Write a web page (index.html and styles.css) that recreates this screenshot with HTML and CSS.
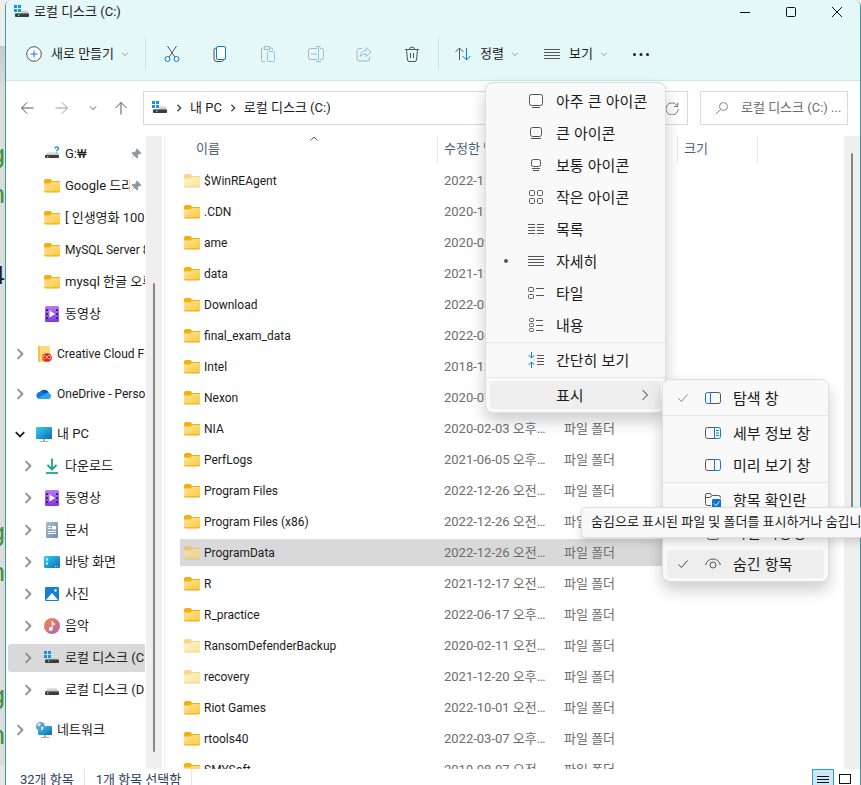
FILE: index.html
```
<!DOCTYPE html>
<html lang="ko">
<head>
    <meta charset="UTF-8">
    <title>로컬 디스크 (C:)</title>
    <link rel="stylesheet" href="styles.css">
</head>
<body>
    <svg class="defs" aria-hidden="true">
        <defs>
            <linearGradient id="gFolder" x1="0" y1="0" x2="1" y2="1">
                <stop offset="0" stop-color="#ffe69b"/><stop offset="1" stop-color="#ffc937"/>
            </linearGradient>
            <linearGradient id="gScreen" x1="0" y1="0" x2="1" y2="1">
                <stop offset="0" stop-color="#37d0e6"/><stop offset="1" stop-color="#0a6bbd"/>
            </linearGradient>
            <linearGradient id="gVideo" x1="0" y1="0" x2="0" y2="1">
                <stop offset="0" stop-color="#b77cf5"/><stop offset="1" stop-color="#8536dc"/>
            </linearGradient>
            <linearGradient id="gMusic" x1="0" y1="0" x2="1" y2="1">
                <stop offset="0" stop-color="#f28c4f"/><stop offset="1" stop-color="#b25fae"/>
            </linearGradient>
            <linearGradient id="gDoc" x1="0" y1="0" x2="1" y2="1">
                <stop offset="0" stop-color="#a9bfd3"/><stop offset="1" stop-color="#6f8cab"/>
            </linearGradient>
            <linearGradient id="gDrive" x1="0" y1="0" x2="0" y2="1">
                <stop offset="0" stop-color="#e9e9e9"/><stop offset="1" stop-color="#b9b9b9"/>
            </linearGradient>
        </defs>
        <symbol id="folder" viewBox="0 0 16 16">
            <path d="M0 2.500Q0 1 1.500 1H6Q7 1 7.500 2L8 3H16V8H0Z" fill="#f5b010"/>
            <path d="M0 5.500H6.500L8 4H16V12.500Q16 14 14.500 14H1.500Q0 14 0 12.500Z" fill="url(#gFolder)"/>
            <path d="M0 13Q.3 14 1.500 14H14.500Q15.700 14 16 13" fill="none" stroke="#e6a31b"/>
        </symbol>
        <symbol id="drive" viewBox="0 0 16 16">
            <path d="M3.500 6H12.500L15 10H1Z" fill="url(#gDrive)"/>
            <rect x="1" y="9.500" width="14" height="3.500" rx=".8" fill="#3b3b3b"/>
            <rect x="3" y="10.500" width="1.500" height="1.500" fill="#3df04d"/>
        </symbol>
        <symbol id="windrive" viewBox="0 0 16 16">
            <path d="M7 6H13L15 10H1.500V9H7Z" fill="url(#gDrive)"/>
            <rect x="1" y="9.500" width="14" height="3.500" rx=".8" fill="#3b3b3b"/>
            <rect x="4" y="10.500" width="1.500" height="1.500" fill="#3df04d"/>
            <path d="M0 1H3V4H0ZM4 1H7V4H4ZM0 5H3V8H0ZM4 5H7V8H4Z" fill="#1593e0"/>
        </symbol>
        <symbol id="gdrive" viewBox="0 0 16 16">
            <path d="M3.500 6H12.500L15 10H1Z" fill="url(#gDrive)"/>
            <rect x="1" y="9" width="14" height="3" rx=".8" fill="#3b3b3b"/>
            <rect x="3" y="10" width="1.500" height="1.500" fill="#3df04d"/>
            <path d="M11.200 2.500Q11.200.8 12.800.8Q14.500.8 14.500 2.300Q14.500 3.300 12.900 4.300V5.300M12.900 6.500V7.500" fill="none" stroke="#1a86d9" stroke-width="1.300"/>
        </symbol>
        <symbol id="video" viewBox="0 0 16 16">
            <rect x="1" y="0" width="14" height="16" rx="1.200" fill="url(#gVideo)"/>
            <path d="M5.500 4.500V11.500L11 8Z" fill="#fff"/>
            <path d="M2 3H4V5H2ZM2 7H4V9H2ZM2 11H4V13H2ZM12 3H14V5H12ZM12 7H14V9H12ZM12 11H14V13H12Z" fill="#47208a"/>
        </symbol>
        <symbol id="creative" viewBox="0 0 16 16">
            <path d="M2 0H13Q14 0 14 1V16H3Q2 16 2 15Z" fill="#ffd974"/>
            <path d="M2 0H4V16H3Q2 16 2 15Z" fill="#f5c04a"/>
            <ellipse cx="11" cy="11.500" rx="5" ry="4.300" fill="#e2231a"/>
            <path d="M8.600 13.200A1.800 1.800 0 1 1 10.300 10.500L12.500 12.800A1.800 1.800 0 1 0 11.800 9.900L9.500 13" fill="none" stroke="#ffe0c9" stroke-width=".9"/>
        </symbol>
        <symbol id="onedrive" viewBox="0 0 16 16">
            <path d="M4 6A5 5 0 0 1 12.500 6L13 9L4 12Z" fill="#0a58b5"/>
            <path d="M3.500 13A3.500 3.500 0 0 1 2.500 6.300Q5 5 7.500 7L12 12Z" fill="#1479d4"/>
            <path d="M3 13Q2 12 3 11.500L9 7.800Q11 6.200 13 7.300A3 3 0 0 1 13 13Z" fill="#2ea3ee"/>
        </symbol>
        <symbol id="pc" viewBox="0 0 16 16">
            <rect x="0" y="1" width="16" height="12" rx="1" fill="url(#gScreen)"/>
            <path d="M7 13H9V15H12V16H4V15H7Z" fill="#a7adb3"/>
        </symbol>
        <symbol id="download" viewBox="0 0 16 16">
            <path d="M8 .5V11M3.500 7L8 11.500L12.500 7" fill="none" stroke="#16a58c" stroke-width="1.800"/>
            <path d="M2 15H14" stroke="#16a58c" stroke-width="1.800"/>
        </symbol>
        <symbol id="document" viewBox="0 0 16 16">
            <rect x="2" y="0" width="12" height="16" rx="1" fill="url(#gDoc)"/>
            <path d="M4 4.500H7M4 6.500H7M4 9.500H12M4 11.500H12" stroke="#fff" stroke-width="1.200"/>
            <path d="M8 4H12V7.500H8Z" fill="#fff"/>
        </symbol>
        <symbol id="desktop" viewBox="0 0 16 16">
            <rect x="0" y="2" width="16" height="12" rx="1.200" fill="url(#gScreen)"/>
            <path d="M2 4.500H4V6.500H2ZM2 8.500H4V10.500H2Z" fill="#e6fbff"/>
            <path d="M11 12.500H12M13 12.500H14" stroke="#fff"/>
        </symbol>
        <symbol id="picture" viewBox="0 0 16 16">
            <rect x="1" y="1" width="14" height="14" rx="1" fill="#1680d6"/>
            <path d="M2 14L8 7L14 14Z" fill="#fff"/>
            <circle cx="11.500" cy="4.500" r="1.200" fill="#fff"/>
        </symbol>
        <symbol id="music" viewBox="0 0 16 16">
            <circle cx="8" cy="8" r="8" fill="url(#gMusic)"/>
            <circle cx="6.700" cy="11" r="1.900" fill="#fff"/>
            <path d="M7.700 3H8.600Q9 5 11 5.500V7Q9.500 7 8.600 6V11H7.700Z" fill="#fff"/>
        </symbol>
        <symbol id="network" viewBox="0 0 16 16">
            <rect x="2" y="4" width="14" height="9" rx="1" fill="url(#gScreen)"/>
            <path d="M8 13H10V15H13V16H5V15H8Z" fill="#a7adb3"/>
            <circle cx="4.500" cy="4.500" r="4.500" fill="#5f9fc4"/>
            <path d="M2 1.500Q4 .5 5 2L3.500 4.500L1 4ZM5 5L7.500 4.500L7 7.500L5 8Z" fill="#c8e6ee"/>
        </symbol>
        <symbol id="pin" viewBox="0 0 12 12">
            <path d="M7 .5L11.500 5L10.500 6L9.500 5.800L7.800 7.500L8 9.500L7 10.500L4.500 8L.8 11.200L4 7.500L1.500 5L2.500 4L4.500 4.200L6.200 2.500L6 1.500Z" fill="#8b98a5"/>
        </symbol>
        <symbol id="right" viewBox="0 0 10 10"><path d="M3 1L7 5L3 9"/></symbol>
        <symbol id="down" viewBox="0 0 10 10"><path d="M1.500 3.500L5 7L8.500 3.500"/></symbol>
        <symbol id="check" viewBox="0 0 12 12"><path d="M1.500 6.500L4.500 9.500L10.500 2.500"/></symbol>
        <symbol id="lines" viewBox="0 0 16 16"><path d="M0 3.500H16M0 6.500H16M0 9.500H16M0 12.500H16"/></symbol>
    </svg>

    <div class="backdrop" aria-hidden="true">
        <span class="code code-1">g</span>
        <span class="code code-2">n</span>
        <span class="code code-3">4</span>
        <span class="code code-4">g</span>
        <span class="code code-5">n</span>
        <span class="code code-6">g</span>
        <span class="code code-7">n</span>
    </div>

    <div class="window">
        <header class="top">
            <div class="titlebar">
                <svg class="icon"><use href="#windrive"/></svg>
                <span class="title">로컬 디스크 (C:)</span>
                <button class="win-btn" aria-label="최소화"><svg viewBox="0 0 12 12"><path d="M1 6.500H11"/></svg></button>
                <button class="win-btn" aria-label="최대화"><svg viewBox="0 0 12 12"><rect x="1.500" y="1.500" width="9" height="9" rx="1"/></svg></button>
                <button class="win-btn" aria-label="닫기"><svg viewBox="0 0 12 12"><path d="M1 1L11 11M11 1L1 11"/></svg></button>
            </div>
            <div class="commands">
                <button class="cmd">
                    <svg class="icon line" viewBox="0 0 16 16"><circle cx="8" cy="8" r="7.300" fill="#fff"/><path class="blue" d="M8 4.500V11.500M4.500 8H11.500"/></svg>
                    새로 만들기
                    <svg class="caret"><use href="#down"/></svg>
                </button>
                <span class="divider"></span>
                <div class="tools">
                    <button class="tool" aria-label="잘라내기"><svg class="icon line" viewBox="0 0 16 16"><path d="M3.500 0L10.800 11M12.500 0L5.200 11"/><g class="blue"><circle cx="3.500" cy="13" r="2.500"/><circle cx="12.500" cy="13" r="2.500"/></g></svg></button>
                    <button class="tool" aria-label="복사"><svg class="icon line" viewBox="0 0 16 16"><path d="M4 2Q2 2 2 4V12.500Q2 15.500 5 15.500H9.500Q11 15.500 11.500 14"/><rect class="blue" x="4.500" y=".5" width="9" height="13" rx="1.500" fill="#fff"/></svg></button>
                    <button class="tool off" aria-label="붙여넣기"><svg class="icon line" viewBox="0 0 16 16"><path d="M5 15.500H2.500Q1.500 15.500 1.500 14.500V3Q1.500 2 2.500 2H4.500M9.500 2H11.500Q12.500 2 12.500 3V4M4.500.5H9.500V3.500H4.500Z"/><rect class="blue" x="7.500" y="5.500" width="7" height="10" rx="1"/></svg></button>
                    <button class="tool off" aria-label="이름 바꾸기"><svg class="icon line" viewBox="0 0 16 16"><path d="M9 2.500H2.500Q.5 2.500 .5 4.500V11.500Q.5 13.500 2.500 13.500H9M12 2.500H13.500Q15.500 2.500 15.500 4.500V11.500Q15.500 13.500 13.500 13.500H12"/><path class="blue" d="M3 8H9M10.500 .5V15.500M8 .5H13M8 15.500H13"/></svg></button>
                    <button class="tool off" aria-label="공유"><svg class="icon line" viewBox="0 0 16 16"><path d="M6 2.500H3Q1 2.500 1 4.500V13Q1 15 3 15H11.500Q13.500 15 13.500 13V11"/><path class="blue" d="M10 1.500L15 6L10 10.500V8Q6 7.500 4 11Q4.500 5 10 4.500Z"/></svg></button>
                    <button class="tool" aria-label="삭제"><svg class="icon line" viewBox="0 0 16 16"><path d="M1 3.500H15M5.500 3.500Q5.500 1 8 1Q10.500 1 10.500 3.500M2.500 3.500L3.500 14Q3.700 15.500 5 15.500H11Q12.300 15.500 12.500 14L13.500 3.500M6.500 7V12M9.500 7V12"/></svg></button>
                </div>
                <span class="divider"></span>
                <button class="cmd">
                    <svg class="icon line" viewBox="0 0 16 16"><path d="M4.500 14V2M.5 6L4.500 2L8.500 6"/><path class="blue" d="M11.500 2V14M7.500 10L11.500 14L15.500 10"/></svg>
                    정렬
                    <svg class="caret"><use href="#down"/></svg>
                </button>
                <button class="cmd cmd-view">
                    <svg class="icon line"><use href="#lines"/></svg>
                    보기
                    <svg class="caret"><use href="#down"/></svg>
                </button>
                <button class="tool more" aria-label="자세히 보기"><svg class="icon" viewBox="0 0 16 16"><circle cx="1.500" cy="8.500" r="1.500"/><circle cx="8" cy="8.500" r="1.500"/><circle cx="14.500" cy="8.500" r="1.500"/></svg></button>
            </div>
        </header>

        <div class="nav">
            <button class="nav-btn" aria-label="뒤로"><svg viewBox="0 0 14 14"><path d="M13.500 7H1.500M7 1.500L1.500 7L7 12.500"/></svg></button>
            <button class="nav-btn dim" aria-label="앞으로"><svg viewBox="0 0 14 14"><path d="M.5 7H12.500M7 1.500L12.500 7L7 12.500"/></svg></button>
            <button class="nav-btn small" aria-label="최근 위치"><svg viewBox="0 0 10 10"><path d="M2 3.500L5 6.500L8 3.500"/></svg></button>
            <button class="nav-btn up" aria-label="위로"><svg viewBox="0 0 14 14"><path d="M7 13.500V1.500M1.500 7L7 1.500L12.500 7"/></svg></button>
            <div class="address">
                <svg class="icon"><use href="#windrive"/></svg>
                <svg class="sep"><use href="#right"/></svg>
                <a href="#">내 PC</a>
                <svg class="sep"><use href="#right"/></svg>
                <a href="#">로컬 디스크 (C:)</a>
                <button class="refresh" aria-label="새로 고침"><svg viewBox="0 0 14 14"><path d="M12.500 5.500A6 6 0 1 0 13 8M12.800 1.500V5.500H9"/></svg></button>
            </div>
            <label class="search">
                <svg viewBox="0 0 14 14"><circle cx="8.500" cy="5.500" r="4"/><path d="M5.500 8.500L1 13"/></svg>
                <input type="text" aria-label="검색" placeholder="로컬 디스크 (C:) ...">
            </label>
        </div>

        <main class="content">
            <nav class="sidebar">
                <ul class="tree" id="tree"></ul>
            </nav>
            <div class="scroll"><span class="thumb thumb-tree"></span></div>
            <section class="files">
                <table>
                    <thead>
                        <tr>
                            <th class="col-name">이름<svg class="sort"><use href="#down"/></svg></th>
                            <th class="col-date">수정한 날짜</th>
                            <th class="col-type">유형</th>
                            <th class="col-size">크기</th>
                            <th></th>
                        </tr>
                    </thead>
                    <tbody id="fileBody"></tbody>
                </table>
            </section>
            <div class="scroll"><span class="thumb thumb-files"></span></div>
        </main>

        <footer class="status">
            <span>32개 항목</span>
            <span>1개 항목 선택함</span>
            <div class="views">
                <button class="view on" aria-label="자세히"><svg viewBox="0 0 12 9"><path d="M0 1.500H12M0 4.500H12M0 7.500H12"/></svg></button>
                <button class="view" aria-label="큰 아이콘"><svg viewBox="0 0 12 11"><rect x=".5" y=".5" width="11" height="9"/></svg></button>
            </div>
        </footer>
    </div>

    <div class="menu menu-view" role="menu">
        <button class="item"><span class="mark"></span><svg class="icon line" viewBox="0 0 16 16"><rect x="1.500" y="1.500" width="13" height="11" rx="2"/><path d="M4 14.500H12"/></svg>아주 큰 아이콘</button>
        <button class="item"><span class="mark"></span><svg class="icon line" viewBox="0 0 16 16"><rect x="2.500" y="2.500" width="11" height="9" rx="2"/><path d="M3 13.500H13"/></svg>큰 아이콘</button>
        <button class="item"><span class="mark"></span><svg class="icon line" viewBox="0 0 16 16"><rect x="3.500" y="2.500" width="9" height="7" rx="2"/><path d="M4 11.500H12M5 13.500H11"/></svg>보통 아이콘</button>
        <button class="item"><span class="mark"></span><svg class="icon line" viewBox="0 0 16 16"><rect x="1.500" y="1.500" width="5" height="5" rx="1"/><rect x="9.500" y="1.500" width="5" height="5" rx="1"/><rect x="1.500" y="9.500" width="5" height="5" rx="1"/><rect x="9.500" y="9.500" width="5" height="5" rx="1"/></svg>작은 아이콘</button>
        <button class="item"><span class="mark"></span><svg class="icon line" viewBox="0 0 16 16"><path d="M0 3.500H7M0 6.500H7M0 9.500H7M0 12.500H7M9 3.500H16M9 6.500H16M9 9.500H16M9 12.500H16"/></svg>목록</button>
        <button class="item"><span class="mark"><span class="dot"></span></span><svg class="icon line"><use href="#lines"/></svg>자세히</button>
        <button class="item"><span class="mark"></span><svg class="icon line" viewBox="0 0 16 16"><rect x=".5" y="2.500" width="5" height="4" rx="1"/><rect x=".5" y="9.500" width="5" height="4" rx="1"/><path d="M8 3.500H16M8 10.500H16"/></svg>타일</button>
        <button class="item"><span class="mark"></span><svg class="icon line" viewBox="0 0 16 16"><rect x="1.500" y="1.500" width="4" height="3" rx="1"/><rect x="1.500" y="6.500" width="4" height="3" rx="1"/><rect x="1.500" y="11.500" width="4" height="3" rx="1"/><path d="M8 3.500H15M8 8.500H15M8 13.500H15"/></svg>내용</button>
        <hr>
        <button class="item"><span class="mark"></span><svg class="icon line" viewBox="0 0 16 16"><path d="M9 3.500H16M9 6.500H16M9 9.500H16M9 12.500H16"/><path class="blue" d="M3.500 0V6M.5 3L3.500 6L6.500 3M3.500 16V10M.5 13L3.500 10L6.500 13"/></svg>간단히 보기</button>
        <hr>
        <button class="item active"><span class="mark"></span><span class="icon"></span>표시<svg class="arrow"><use href="#right"/></svg></button>
    </div>

    <div class="menu menu-show" role="menu">
        <button class="item"><span class="mark"><svg class="tick dim"><use href="#check"/></svg></span><svg class="icon line" viewBox="0 0 16 16"><path d="M5.500 2.500H13.500Q15.500 2.500 15.500 4.500V11.500Q15.500 13.500 13.500 13.500H5.500"/><path class="blue" d="M5.500 2.500H2.500Q.5 2.500 .5 4.500V11.500Q.5 13.500 2.500 13.500H5.500Z"/></svg>탐색 창</button>
        <hr>
        <button class="item"><span class="mark"></span><svg class="icon line" viewBox="0 0 16 16"><path d="M9.500 2.500H2.500Q.5 2.500 .5 4.500V11.500Q.5 13.500 2.500 13.500H9.500"/><path class="blue" d="M9.500 2.500H13.500Q15.500 2.500 15.500 4.500V11.500Q15.500 13.500 13.500 13.500H9.500ZM11 5.500H14M11 8H14M11 10.500H14"/></svg>세부 정보 창</button>
        <button class="item"><span class="mark"></span><svg class="icon line" viewBox="0 0 16 16"><path d="M9.500 2.500H2.500Q.5 2.500 .5 4.500V11.500Q.5 13.500 2.500 13.500H9.500"/><path class="blue" d="M9.500 2.500H13.500Q15.500 2.500 15.500 4.500V11.500Q15.500 13.500 13.500 13.500H9.500Z"/></svg>미리 보기 창</button>
        <hr>
        <button class="item"><span class="mark"></span><svg class="icon line" viewBox="0 0 16 16"><path d="M6 13.500H2.500Q.5 13.500 .5 11.500V3Q.5 1.500 2 1.500H5L7.500 3.500H13.500Q15.500 3.500 15.500 5.500V6M.5 5.500H5L7.500 3.500"/><rect x="7" y="7" width="9" height="9" rx="1" fill="#0a78d4" stroke="none"/><path d="M9 11.500L11 13.500L14.500 9.500" stroke="#fff"/></svg>항목 확인란</button>
        <button class="item"><span class="mark"></span><svg class="icon line" viewBox="0 0 16 16"><rect x="2.500" y="2.500" width="11" height="13" rx="2"/><path d="M2.500 6.500H13.500"/></svg>파일 확장명</button>
        <button class="item active"><span class="mark"><svg class="tick"><use href="#check"/></svg></span><svg class="icon line" viewBox="0 0 16 16"><path d="M.5 9Q2.500 3 8 3Q13.500 3 15.500 9"/><circle cx="8" cy="9" r="3"/></svg>숨긴 항목</button>
    </div>

    <div class="tooltip" role="tooltip">숨김으로 표시된 파일 및 폴더를 표시하거나 숨깁니다.</div>

    <script>
        // icon, label, level, state, extra
        const tree = [
            ["gdrive", "G:₩", 2, "", "pinned"],
            ["folder", "Google 드라이브", 2, "", "pinned"],
            ["folder", "[ 인생영화 100선 ]", 2, "", ""],
            ["folder", "MySQL Server 8.0", 2, "", ""],
            ["folder", "mysql 한글 오류", 2, "", ""],
            ["video", "동영상", 2, "", ""],
            ["creative", "Creative Cloud Files", 1, "right", "group"],
            ["onedrive", "OneDrive - Personal", 1, "right", "group"],
            ["pc", "내 PC", 1, "down", "group"],
            ["download", "다운로드", 2, "right", ""],
            ["video", "동영상", 2, "right", ""],
            ["document", "문서", 2, "right", ""],
            ["desktop", "바탕 화면", 2, "right", ""],
            ["picture", "사진", 2, "right", ""],
            ["music", "음악", 2, "right", ""],
            ["windrive", "로컬 디스크 (C:)", 2, "right", "selected"],
            ["drive", "로컬 디스크 (D:)", 2, "right", ""],
            ["network", "네트워크", 1, "right", "group"]
        ];

        // name, date, hidden
        const files = [
            ["$WinREAgent", "2022-12-14 오전 9:12", true],
            [".CDN", "2020-12-03 오후 2:30", false],
            ["ame", "2020-02-11 오전 8:41", false],
            ["data", "2021-12-20 오후 1:05", false],
            ["Download", "2022-03-07 오후 6:22", false],
            ["final_exam_data", "2022-06-17 오후 3:10", false],
            ["Intel", "2018-12-05 오전 1:44", false],
            ["Nexon", "2020-07-19 오후 5:20", false],
            ["NIA", "2020-02-03 오후 4:17", false],
            ["PerfLogs", "2021-06-05 오후 9:10", false],
            ["Program Files", "2022-12-26 오전 9:33", false],
            ["Program Files (x86)", "2022-12-26 오전 9:33", false],
            ["ProgramData", "2022-12-26 오전 9:34", true],
            ["R", "2021-12-17 오전 2:08", false],
            ["R_practice", "2022-06-17 오후 3:42", false],
            ["RansomDefenderBackup", "2020-02-11 오전 8:50", true],
            ["recovery", "2021-12-20 오후 1:15", true],
            ["Riot Games", "2022-10-01 오전 1:29", false],
            ["rtools40", "2022-03-07 오후 6:31", false],
            ["SMYSoft", "2019-08-07 오전 7:55", false]
        ];

        let treeHtml = "";
        for (const [icon, label, level, state, extra] of tree) {
            const arrow = state ? `<svg class="twist ${state}"><use href="#${state}"/></svg>` : `<span class="twist"></span>`;
            const pin = extra === "pinned" ? `<svg class="pin"><use href="#pin"/></svg>` : "";
            const latin = /[가-힣₩]/.test(label) ? "" : "latin";
            treeHtml += `<li class="node level-${level} ${extra}">${arrow}<svg class="icon"><use href="#${icon}"/></svg><a href="#" class="${latin}">${label}</a>${pin}</li>`;
        }
        document.getElementById("tree").innerHTML = treeHtml;

        let rows = "";
        for (const [name, date, hidden] of files) {
            rows += `
                <tr class="${name === "ProgramData" ? "selected" : ""}">
                    <td class="name"><div class="latin"><svg class="icon ${hidden ? "faded" : ""}"><use href="#folder"/></svg>${name}</div></td>
                    <td class="date">${date}</td>
                    <td>파일 폴더</td>
                    <td></td>
                    <td class="rest"></td>
                </tr>`;
        }
        document.getElementById("fileBody").innerHTML = rows;
    </script>
</body>
</html>
```
FILE: styles.css
```
* {
    box-sizing: border-box;
}
body {
    margin: 0;
    height: 100vh;
    display: flex;
    overflow: hidden;
    background: #fff;
    color: #1b1b1b;
    font-family: Roboto, "Noto Sans CJK KR", sans-serif;
    font-size: 13px;
    line-height: 20px;
}
button, input {
    font: inherit;
    color: inherit;
    background: none;
    border: none;
    padding: 0;
    margin: 0;
}
button {
    display: flex;
    align-items: center;
    justify-content: center;
}
a {
    color: inherit;
    text-decoration: none;
}
svg {
    flex: none;
    fill: none;
    stroke-width: 1;
}
.defs {
    position: absolute;
    width: 0;
    height: 0;
}
.latin {
    font-size: 12px;
}
.icon {
    width: 16px;
    height: 16px;
    flex: none;
}
.line {
    stroke: #555;
}
.blue {
    stroke: #0a78d4;
}

/* page behind the window */
.backdrop {
    position: relative;
    width: 5px;
    flex: none;
    overflow: hidden;
    background: linear-gradient(#ededed 46px, #c9c9c9 46px, #dcdcdc 90px, #dcdcdc 765px, #e6e6e6 765px);
}
.code {
    position: absolute;
    right: 0;
    font-family: "Liberation Sans", sans-serif;
    font-size: 26px;
    line-height: 30px;
    color: #3f8f45;
}
.code-1 { top: 139px; }
.code-2 { top: 179px; }
.code-3 { top: 260px; color: #222; }
.code-4 { top: 517px; }
.code-5 { top: 557px; }
.code-6 { top: 680px; }
.code-7 { top: 720px; }

.window {
    flex: 1;
    min-width: 0;
    display: flex;
    flex-direction: column;
    border-left: 1px solid #3e98a4;
    border-right: 1px solid #3e98a4;
    border-radius: 6px 6px 0 0;
    overflow: hidden;
}

/* title and command bar */
.top {
    background: #e4f8f7;
    border-bottom: 1px solid #d2e4e3;
}
.titlebar {
    display: flex;
    align-items: center;
    height: 24px;
    padding-left: 8px;
}
.title {
    flex: 1;
    padding-left: 4px;
}
.win-btn {
    width: 46px;
    height: 24px;
}
.win-btn svg {
    width: 12px;
    height: 12px;
    stroke: #111;
}
.commands {
    display: flex;
    align-items: center;
    height: 56px;
    padding: 3px 0 0 20px;
}
.cmd {
    gap: 9px;
}
.cmd-view {
    margin-left: 25px;
}
.caret {
    width: 8px;
    height: 8px;
    margin-left: -2px;
    stroke: #7b8a89;
}
.divider {
    width: 1px;
    height: 32px;
    margin: 0 16px;
    background: #cfe3e2;
}
.tools {
    display: flex;
    gap: 8px;
    margin: 0 -10px;
}
.tool {
    width: 40px;
    height: 32px;
}
.off {
    opacity: 0.4;
}
.more {
    margin-left: 13px;
}
.more svg {
    fill: #222;
}

/* navigation row */
.nav {
    display: flex;
    align-items: center;
    padding: 10px 12px 7px 13px;
}
.nav-btn {
    width: 16px;
    height: 34px;
    margin-right: 19px;
}
.nav-btn svg {
    width: 14px;
    height: 14px;
    stroke: #555;
}
.nav-btn.dim svg {
    stroke: #999;
}
.nav-btn.small {
    width: 10px;
    margin-right: 15px;
}
.nav-btn.small svg {
    width: 10px;
    height: 10px;
}
.nav-btn.up {
    margin: 0 14px 0 0;
}
.nav-btn.dim {
    margin-right: 18px;
}
.address {
    flex: 1;
    min-width: 0;
    display: flex;
    align-items: center;
    gap: 7px;
    height: 34px;
    padding: 0 8px;
    border: 1px solid #d9d9d9;
}
.sep {
    width: 8px;
    height: 8px;
    stroke: #555;
    stroke-width: 2;
}
.refresh {
    margin-left: auto;
}
.refresh svg {
    width: 14px;
    height: 14px;
    stroke: #777;
}
.search {
    display: flex;
    align-items: center;
    gap: 12px;
    width: 148px;
    height: 34px;
    margin-left: 12px;
    padding-left: 14px;
    border: 1px solid #d9d9d9;
}
.search svg {
    width: 14px;
    height: 14px;
    stroke: #888;
}
.search input {
    flex: 1;
    min-width: 0;
}
.search input::placeholder {
    color: #6d6d6d;
}

/* tree and file list */
.content {
    flex: 1;
    min-height: 0;
    display: flex;
    padding-top: 4px;
}
.sidebar {
    width: 139px;
    margin-right: 1px;
    overflow: hidden;
}
.tree {
    margin: 0;
    padding: 4px 0 0 2px;
    list-style: none;
}
.node {
    display: flex;
    align-items: center;
    height: 28px;
    margin-bottom: 4px;
    padding-left: 6px;
    border-radius: 3px 0 0 3px;
    white-space: nowrap;
}
.level-2 {
    padding-left: 14px;
}
.node.group {
    margin-top: 12px;
}
.node.selected {
    background: #d9d9d9;
}
.node a {
    flex: 1;
    min-width: 0;
    overflow: hidden;
    padding-left: 5px;
}
.twist {
    width: 12px;
    height: 12px;
    margin-right: 10px;
    stroke: #8c8c8c;
    stroke-width: 1.5;
}
.twist.down {
    stroke: #222;
}
.pin {
    width: 12px;
    height: 12px;
    margin-right: 3px;
}
.scroll {
    width: 16px;
    display: flex;
    justify-content: center;
    background: #efefef;
}
.thumb {
    width: 2px;
    border-radius: 1px;
    background: #868686;
}
.thumb-tree {
    margin: 147px 0 17px;
}
.thumb-files {
    margin: 17px 0 240px;
}
.files {
    flex: 1;
    min-width: 0;
    overflow: hidden;
    margin-left: 2px;
    padding-left: 15px;
    border-left: 1px solid #f0f0f0;
}
table {
    width: 100%;
    table-layout: fixed;
    margin-top: -4px;
    border-spacing: 0 4px;
}
th, td {
    height: 27px;
    padding: 0 0 0 6px;
    text-align: left;
    white-space: nowrap;
    overflow: hidden;
    text-overflow: ellipsis;
}
th {
    position: relative;
    padding-bottom: 2px;
    font-weight: normal;
    color: #4c607a;
    border-right: 1px solid #e5e5e5;
}
th:last-child, .col-date {
    border-right: none;
}
.col-name {
    width: 258px;
    padding-left: 16px;
}
.col-date {
    width: 120px;
}
.col-type {
    width: 120px;
}
.col-size {
    width: 80px;
}
.sort {
    position: absolute;
    top: -2px;
    left: 50%;
    width: 10px;
    height: 10px;
    stroke: #555;
    transform: rotate(180deg);
}
td {
    color: #6d6d6d;
}
td.date {
    padding-right: 10px;
}
td.name {
    padding-left: 4px;
    color: #1b1b1b;
}
td.name div {
    display: flex;
    align-items: center;
    gap: 4px;
}
.faded {
    opacity: 0.5;
}
tr.selected td {
    background: #d9d9d9;
}
tr.selected td.rest {
    background: none;
}

/* status bar */
.status {
    display: flex;
    height: 16px;
    padding-left: 14px;
    line-height: 22px;
    color: #2c4160;
}
.status span {
    padding-right: 10px;
    margin-right: 11px;
    border-right: 1px solid #e5e5e5;
}
.views {
    display: flex;
    margin-left: auto;
    padding-right: 4px;
}
.view {
    width: 22px;
    height: 20px;
    border: 1px solid transparent;
}
.view svg {
    width: 12px;
    height: 11px;
    stroke: #111;
}
.view.on {
    background: #cce8f5;
    border-color: #2a9bd6;
}

/* pop-up menus */
.menu {
    position: absolute;
    padding: 2px 0 3px;
    font-family: "Noto Sans CJK KR", sans-serif;
    font-size: 15px;
    background: #f9f9f9;
    border: 1px solid #dedede;
    border-radius: 8px;
    box-shadow: 0 8px 16px rgba(0, 0, 0, 0.2);
}
.menu-view {
    left: 485px;
    top: 82px;
    width: 181px;
}
.menu-show {
    left: 662px;
    top: 379px;
    width: 167px;
}
.menu hr {
    margin: -1px 0 3px;
    border: none;
    border-top: 1px solid #e5e5e5;
}
.item {
    justify-content: flex-start;
    width: calc(100% - 8px);
    height: 28px;
    margin: 2px 4px 4px;
    border-radius: 4px;
}
.item.active {
    background: #eeeeee;
    margin-bottom: 0;
}
.mark {
    width: 32px;
    display: flex;
    justify-content: center;
}
.item .icon {
    margin: 0 12px 0 6px;
}
.dot {
    width: 4px;
    height: 4px;
    border-radius: 50%;
    background: #555;
}
.tick {
    width: 12px;
    height: 12px;
    stroke: #444;
}
.tick.dim {
    stroke: #888;
}
.arrow {
    width: 12px;
    height: 12px;
    margin: 0 10px 0 auto;
    stroke: #777;
}
.tooltip {
    position: absolute;
    left: 581px;
    top: 507px;
    right: -20px;
    padding: 4px 9px 5px;
    border: 1px solid #dedede;
    border-radius: 4px;
    background: #f9f9f9;
    box-shadow: 0 4px 8px rgba(0, 0, 0, 0.15);
    white-space: nowrap;
    overflow: hidden;
}
```
